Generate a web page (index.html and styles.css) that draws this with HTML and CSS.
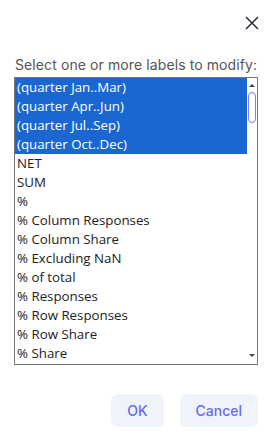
FILE: index.html
```html
<!DOCTYPE html>
<html lang="en">
<head>
  <meta charset="UTF-8">
  <meta name="viewport" content="width=device-width, initial-scale=1.0">
  <title>Modify labels</title>
  <link rel="stylesheet" href="styles.css">
</head>
<body>
  <div class="dialog">
    <div class="top">
      <button class="close" aria-label="Close">
        <svg width="14" height="14" viewBox="0 0 14 14"><path d="M1 1 L13 13 M13 1 L1 13" stroke="#2b3445" stroke-width="1.6" fill="none"/></svg>
      </button>
    </div>

    <p class="label">Select one or more labels to modify:</p>

    <div class="picker">
      <div class="list">
        <div class="item selected">(quarter Jan..Mar)</div>
        <div class="item selected">(quarter Apr..Jun)</div>
        <div class="item selected">(quarter Jul..Sep)</div>
        <div class="item selected">(quarter Oct..Dec)</div>
        <div class="item">NET</div>
        <div class="item">SUM</div>
        <div class="item">%</div>
        <div class="item">% Column Responses</div>
        <div class="item">% Column Share</div>
        <div class="item">% Excluding NaN</div>
        <div class="item">% of total</div>
        <div class="item">% Responses</div>
        <div class="item">% Row Responses</div>
        <div class="item">% Row Share</div>
        <div class="item">% Share</div>
      </div>
      <div class="scrollbar">
        <div class="arrow up"></div>
        <div class="thumb"></div>
        <div class="arrow down"></div>
      </div>
    </div>

    <div class="actions">
      <button class="btn">OK</button>
      <button class="btn">Cancel</button>
    </div>
  </div>
</body>
</html>
```

FILE: styles.css
```css
body { margin: 0; background: #fff; font-family: 'Open Sans', sans-serif; }
.dialog { width: 244px; padding: 16px 13px 0 14px; }
.top { display: flex; justify-content: flex-end; height: 14px; }
.close { border: 0; background: none; padding: 0; width: 14px; height: 14px; margin-right: -1px; cursor: pointer; display: block; }
.close svg { display: block; }
.label { margin: 26px 0 4px 1px; font-family: 'Inter', sans-serif; font-size: 14px; letter-spacing: 0.1px; color: #555; line-height: 17px; white-space: nowrap; }
.picker { display: flex; border: 1px solid #777; height: 286px; overflow: hidden; }
.list { flex: 1; overflow: hidden; }
.item { height: 19px; line-height: 19px; padding-left: 2px; font-size: 13.3px; color: #222; white-space: nowrap; }
.item.selected { background: #1a67d2; color: #fff; }
.scrollbar { width: 10px; display: flex; flex-direction: column; align-items: center; }
.arrow { width: 0; height: 0; border-left: 3px solid transparent; border-right: 3px solid transparent; }
.arrow.up { border-bottom: 3px solid #444; margin-top: 6px; }
.thumb { width: 8px; height: 31px; margin-top: 5px; border: 1px solid #7d7df0; border-radius: 5px; background: #fff; box-sizing: border-box; }
.arrow.down { border-top: 3px solid #444; margin-top: auto; margin-bottom: 7px; }
.actions { display: flex; justify-content: flex-end; gap: 16px; margin-top: 29px; }
.btn { height: 33px; border: 0; border-radius: 7px; background: #eff3fa; color: #6a6af2; font-family: 'Inter', sans-serif; font-size: 14px; font-weight: 500; padding: 0 16px; cursor: pointer; }
```
